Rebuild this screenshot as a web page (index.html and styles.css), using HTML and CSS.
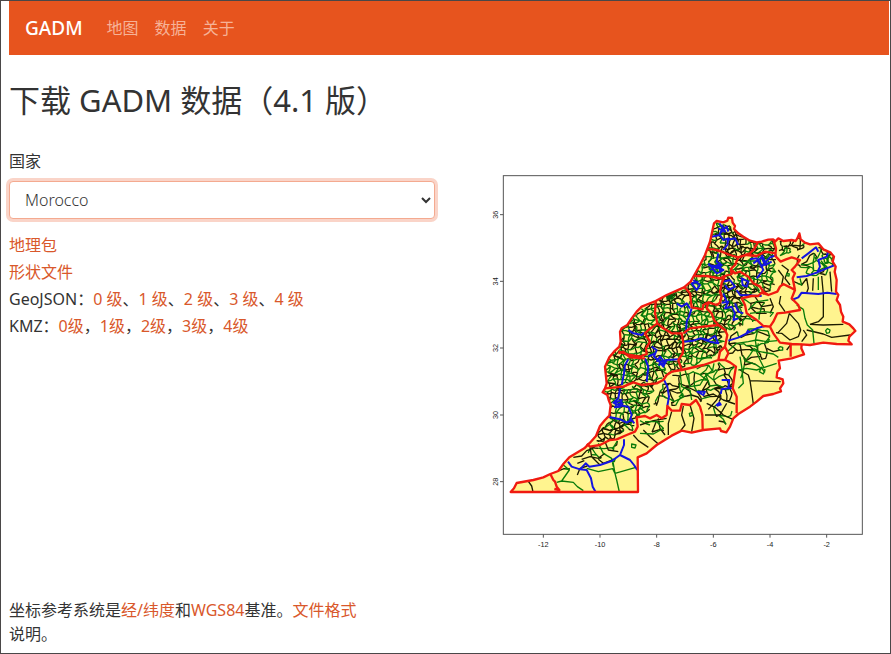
FILE: index.html
```html
<!DOCTYPE html>
<html lang="zh-CN">
<head>
    <meta charset="utf-8" />
    <meta name="viewport" content="width=device-width, initial-scale=1" />
    <title>GADM</title>
    <link rel="stylesheet" href="styles.css">
</head>
<body>
    <nav class="navbar">
        <a class="navbar-brand" href="#">GADM</a>
        <a class="nav-link" href="#">地图</a>
        <a class="nav-link" href="#">数据</a>
        <a class="nav-link" href="#">关于</a>
    </nav>

    <main>
        <h1 class="page-title">下载 GADM 数据（4.1 版）</h1>

        <div class="download">
            <div class="download-form">
                <label class="form-label" for="country">国家</label>
                <select class="form-select" id="country">
                    <option>Morocco</option>
                </select>
                <ul class="file-list">
                    <li><a href="#">地理包</a></li>
                    <li><a href="#">形状文件</a></li>
                    <li>GeoJSON：<a href="#">0 级</a>、<a href="#">1 级</a>、<a href="#">2 级</a>、<a href="#">3 级</a>、<a href="#">4 级</a></li>
                    <li>KMZ：<a href="#">0级</a>，<a href="#">1级</a>，<a href="#">2级</a>，<a href="#">3级</a>，<a href="#">4级</a></li>
                </ul>
            </div>

            <svg class="map" viewBox="-81 0 1278 1155" role="img" aria-label="Morocco">
                <defs>
                    <path id="land" d="M62 966L72 955 80 939 130 930 160 922 181 912 205 903 220 882 238 862 283 835 300 818 318 798 330 768 345 750 358 737 362 705 356 690 352 675 338 667 345 655 350 640 347 610 345 590 358 562 372 545 388 530 392 515 390 485 395 475 412 465 425 445 440 425 455 410 497 393 530 375 582 352 602 335 613 315 630 285 645 255 660 215 672 160 680 153 700 157 712 152 715 143 726 144 728 158 735 168 732 177 745 190 760 200 780 212 800 217 815 215 835 209 850 208 855 215 865 205 880 213 905 210 917 213 922 205 928 190 932 208 945 218 960 223 985 220 1000 238 1022 248 1032 260 1028 275 1037 290 1034 305 1040 330 1038 365 1045 375 1040 390 1050 405 1053 425 1060 440 1058 455 1078 463 1090 475 1096 483 1078 500 1075 512 1085 523 1040 522 1000 518 960 525 935 523 934 535 942 553 905 565 866 572 870 595 862 605 860 622 878 628 880 640 870 655 873 664 850 672 820 678 800 695 780 710 745 732 730 745 720 770 709 787 693 783 690 775 640 780 605 788 575 782 545 797 500 825 470 850 443 862 444 966Z" />
                    <clipPath id="landClip"><use href="#land" /></clipPath>
                </defs>
                <use class="land" href="#land" />

                <g clip-path="url(#landClip)">
                    <g id="communes"></g>

                    <g class="line level-4">
                        <path d="M115 934L125 948 129 966M205 903L222 896 240 897M262 915L270 895 292 888M250 862L275 858 290 842 310 835M275 868L300 860 325 865 345 850M262 880L283 872M300 832L305 860 330 885M325 868L340 880 365 870M345 815L355 840 385 845M430 795L445 812 475 832M460 780L480 800 505 822M505 745L510 775 525 795M545 725L535 760 535 795M580 708L575 735 585 765 572 782M600 705L612 745 605 785M450 765L490 752 530 745M645 735L690 735 710 700M650 700L675 712 700 735 728 748M640 680L670 672 700 690 735 702M655 718L680 690 690 670M780 632L872 635M780 632L785 665 790 702M750 600L775 615 780 632M1000 372L1000 440 985 455 960 463M960 463L1000 465 1060 463M950 480L1000 492 1025 502 1080 495M898 430L925 460 932 480 925 500M898 430L890 460 862 490M925 500L900 510 875 490 858 488M840 385L850 410 840 430M872 378L868 400 885 425M830 430L800 430 780 410M795 380L815 410 845 405M940 480L950 495 935 515M870 540L850 545 830 535M905 520L890 540" />
                        <path d="M950 325L955 355 950 368M995 318L1000 372M970 325L968 362M1020 305L1025 365M912 335L935 345 950 325M875 285L895 300 885 325 900 345M865 300L880 320 875 345" />
                    </g>
                    <g class="line level-3">
                        <path d="M200 937L215 933 238 900 225 895M215 933L250 937 262 950 280 962M290 895L325 905 368 896 375 910 435 893M368 870L375 910 380 930 388 966M325 820L340 850 365 865 370 890M220 885L238 900M425 822L438 825 435 834 425 832ZM365 868L375 868 373 875 365 874ZM940 418L945 445 952 465 968 480 972 520M940 418L920 405M1007 482L1012 476 1020 480 1018 488 1010 490ZM865 535L870 530 878 532 878 540 868 541ZM598 730L606 728 608 736 600 739ZM568 680L575 673 582 680 575 684ZM712 545L740 520 775 515 800 510 830 515 862 512M750 560L755 590 760 640 745 655M745 600L770 595 800 600 830 590 860 580M780 540L810 545 850 552 865 562M805 520L800 545 810 570 825 600 820 612 808 605 815 590M570 605L575 650 600 660 605 690M585 600L600 650 630 645 645 620 668 600 672 580M450 790L490 792 520 775 500 755 465 755M780 430L820 425 850 428 840 440M775 420L800 395 835 390M985 320L985 360M930 325L935 345 922 340M890 310L898 312 897 318 890 317Z" />
                    </g>
                    <g class="line level-2">
                        <path d="M234 875L245 890 270 898 290 900 303 925 308 950 317 966M270 898L287 880 298 890 330 885 365 873 390 855 402 825 402 808M390 855L420 870 432 885 442 900M905 390L925 382 935 368 985 372 1012 368 1040 372M920 322L950 318 980 308 1010 295 1035 285M935 265L955 250 978 232 985 245M980 310L990 290 985 270 1010 260 1015 245M582 515L610 512 630 505 655 510 675 498 685 520 660 515 640 508M715 512L745 503 770 490 800 475 825 468M768 492L775 480M520 625L532 650 537 680 532 708M415 568L405 585 402 610 395 645M465 565L475 590 470 635M485 530L500 540 492 560 510 575 530 570 565 568M495 550L475 560M500 565L520 590 530 570M500 575L510 560 525 578 505 585M695 630L718 630 715 655 695 658 692 672M715 655L730 655M622 665L645 665 640 675ZM680 705L688 698 692 704 683 707ZM390 655L385 685 370 698 385 705 415 710 425 735 420 750M370 700L395 690 390 710 372 712M355 740L390 748 410 758 425 750 433 760M375 705L400 700M415 480L430 490 455 495 462 488M605 415L597 440 590 455 588 490M560 400L575 410 590 400 600 415M688 160L700 175 690 190 710 170 715 185M685 175L705 185 695 165M665 200L690 195 700 210 715 205 712 225 700 240M710 210L735 205 745 225M655 285L680 290 700 300 680 310 655 280M685 250L680 275 695 285 675 295M660 300L690 280 690 310M780 268L800 265 815 290 840 262 860 255M790 280L815 262 825 285 845 275M805 270L820 300 800 325M815 255L830 285M610 330L630 345 620 360 605 340 625 335M700 335L720 330 735 350 715 360 705 345M755 325L775 335 770 350 758 345ZM695 398L715 395 705 415 725 410 735 430 730 450 745 445M735 400L745 425 760 430M700 370L710 395M740 360L750 375 815 378" />
                    </g>
                    <path class="casablanca" d="M527 375L550 370 548 388 530 390Z" />
                </g>

                <g class="line level-1">
                    <path d="M652 238L670 238 690 243 720 255 745 262 780 250 792 238 803 218M745 262L735 285 722 297 725 312 705 318 690 325 650 318 613 318M722 297L735 310 750 305 775 320 790 340 810 350 820 365 835 375 862 365 870 350 880 342 900 352 915 360 905 385 925 405 930 420 885 428 862 430 850 455 840 470M850 208L858 235 856 258 872 275 888 268 905 262 930 270 915 290 905 300 915 310 908 325 915 360M745 262L770 255 800 258 825 245 858 250M705 318L695 340 690 365 695 380 690 398M690 398L680 405 655 397 640 405 638 418 605 412 600 370 582 350M655 397L650 415 665 430 672 450 685 465 640 470 600 475 580 490M497 393L495 430 502 460 520 475 545 490 575 490 580 520 578 550 565 570 575 600M685 465L705 480 712 495 705 530 690 545 685 570 640 585 575 600 545 605 530 615 520 630 500 640 455 645 430 637 400 650 345 655M835 375L815 368 805 378 785 378 755 385 765 405 770 430 800 450 820 468 840 470 850 490 870 518 905 522 935 523M502 460L475 480 465 490 480 515 468 535 470 552 450 560 420 555 385 545M465 565L420 562 400 545 385 550M685 570L705 570 720 577 738 590 733 620 728 655 740 680 740 730M705 530L715 550 705 570M638 778L637 735 630 710 618 690 600 705 575 702 570 722 545 722 532 708 530 735 515 745 500 735 480 745 465 738 440 742 443 770 435 785 410 795 380 808 360 810 330 825 300 830 290 822M181 912L190 930 195 935 200 950 208 960 193 957M902 522L902 560" />
                </g>
                <use class="line country" href="#land" />

                <g class="axis">
                    <rect x="40" y="17" width="1077" height="1076" />
                    <path d="M30 134h10M30 334h10M30 534h10M30 735h10M30 935h10M160 1093v10M330 1093v10M500 1093v10M670 1093v10M840 1093v10M1010 1093v10" />
                </g>
                <g class="axis-label">
                    <text x="160" y="1131">-12</text>
                    <text x="330" y="1131">-10</text>
                    <text x="500" y="1131">-8</text>
                    <text x="670" y="1131">-6</text>
                    <text x="840" y="1131">-4</text>
                    <text x="1010" y="1131">-2</text>
                    <text transform="translate(24 134) rotate(-90)">36</text>
                    <text transform="translate(24 334) rotate(-90)">34</text>
                    <text transform="translate(24 534) rotate(-90)">32</text>
                    <text transform="translate(24 735) rotate(-90)">30</text>
                    <text transform="translate(24 935) rotate(-90)">28</text>
                </g>
            </svg>
        </div>

        <p class="notes">坐标参考系统是<a href="#">经/纬度</a>和<a href="#">WGS84</a>基准。<a href="#">文件格式</a>说明。</p>
    </main>

    <script src="map.js"></script>
</body>
</html>
```
FILE: styles.css
```css
* {
    box-sizing: border-box;
}

body {
    margin: 0;
    min-height: 100vh;
    padding: 0 1px 0 8px;
    border: 1px solid #4a4748;
    font-family: 'Noto Sans', 'Noto Sans CJK SC', sans-serif;
    font-size: 16px;
    line-height: 24px;
    color: #333;
    background: #fff;
}

a {
    color: #d9582b;
    text-decoration: none;
}

.navbar {
    display: flex;
    align-items: center;
    gap: 16px;
    height: 54px;
    padding: 0 16px;
    background: #e7541e;
}

.navbar-brand {
    margin-right: 8px;
    font-size: 19px;
    font-weight: 500;
    color: #fff;
}

.nav-link {
    color: #f6b297;
}

.page-title {
    margin: 25px 0 19px;
    font-size: 31px;
    font-weight: 400;
    line-height: 40px;
}

.download {
    display: grid;
    grid-template-columns: 1fr 1fr;
    gap: 28px;
}

.download-form {
    padding-top: 10px;
}

.form-label {
    display: block;
    margin-bottom: 8px;
}

.form-select {
    display: block;
    width: 100%;
    height: 38px;
    padding: 6px 2px 6px 11px;
    border: 1px solid #f4aa90;
    border-radius: 4px;
    outline: none;
    box-shadow: 0 0 0 3px #fad4c8;
    font-family: inherit;
    font-size: 16px;
    font-weight: 300;
    color: #333;
    background: #fff;
}

.file-list {
    margin: 13px 0 0;
    padding: 0;
    list-style: none;
    line-height: 27px;
}

.map {
    display: block;
    width: 100%;
    margin-top: 31px;
}

.notes {
    max-width: 40%;
    margin: 43px 0 0;
}

.land {
    fill: #fff48f;
}

.line {
    fill: none;
    stroke-linejoin: round;
}

.level-4 {
    stroke: #1c1c00;
    stroke-width: 4;
}

.level-3 {
    stroke: #0a7a0a;
    stroke-width: 4;
}

.level-2 {
    stroke: #1414e0;
    stroke-width: 6;
}

.level-1 {
    stroke: #f01a10;
    stroke-width: 7;
}

.country {
    stroke: #f01a10;
    stroke-width: 7;
}

.casablanca {
    fill: #0a5a0a;
}

.axis {
    fill: none;
    stroke: #555;
    stroke-width: 3;
}

.axis-label {
    font-family: 'Liberation Sans', sans-serif;
    font-size: 22px;
    text-anchor: middle;
    fill: #222;
}
```
FILE: map.js
```js
// commune borders: an irregular mesh in each zone, finer where communes are small
const zones = [
    { cell: 12, skip: 0.06, points: '672,150 740,170 800,217 850,208 860,260 860,340 835,375 755,380 765,430 800,452 760,470 712,490 705,540 640,583 575,600 530,615 500,640 430,642 340,655 330,540 390,460 500,380 600,330' },
    { cell: 12, skip: 0.1, points: '340,655 430,642 520,625 480,680 480,725 440,745 435,785 300,832 355,740' },
    { cell: 13, skip: 0.15, points: '858,200 990,210 940,245 870,258' },
    { cell: 12, skip: 0.1, points: '980,215 1040,240 1040,290 995,285' },
    { cell: 22, skip: 0.12, points: '480,660 530,615 685,575 735,590 728,655 735,700 640,700 610,690 570,710 530,705 480,735' },
    { cell: 25, skip: 0.15, points: '712,500 760,470 840,470 862,510 862,560 820,620 740,640 735,590 700,550' },
    { cell: 21, skip: 0.15, points: '920,250 1000,235 1035,300 1035,320 920,330' },
    { cell: 21, skip: 0.2, points: '270,840 400,800 400,830 310,880' },
    { cell: 24, skip: 0.25, points: '755,380 835,375 820,465 775,430' },
    { cell: 25, skip: 0.3, points: '445,745 530,740 530,795 480,820' },
    { cell: 24, skip: 0.2, points: '640,690 735,690 740,735 700,775 640,725' }
];

let seed = 41;
function random() {
    seed = (seed * 16807) % 2147483647;
    return seed / 2147483647;
}

function inside(x, y, polygon) {
    let hit = false;
    for (let i = 0, j = polygon.length - 1; i < polygon.length; j = i++) {
        const [xi, yi] = polygon[i];
        const [xj, yj] = polygon[j];
        if ((yi > y) !== (yj > y) && x < (xj - xi) * (y - yi) / (yj - yi) + xi) {
            hit = !hit;
        }
    }
    return hit;
}

const paths = { 'level-4': '', 'level-3': '' };

zones.forEach(zone => {
    const polygon = zone.points.split(' ').map(p => p.split(',').map(Number));
    const xs = polygon.map(p => p[0]);
    const ys = polygon.map(p => p[1]);
    const left = Math.min(...xs);
    const top = Math.min(...ys);
    const cols = Math.ceil((Math.max(...xs) - left) / zone.cell) + 1;
    const rows = Math.ceil((Math.max(...ys) - top) / zone.cell) + 1;
    const grid = [];

    for (let r = 0; r <= rows; r++) {
        grid.push([]);
        for (let c = 0; c <= cols; c++) {
            grid[r].push([
                Math.round(left + (c + (r % 2) / 2 + (random() - 0.5) * 1.1) * zone.cell),
                Math.round(top + (r + (random() - 0.5) * 1.1) * zone.cell)
            ]);
        }
    }

    function edge(a, b) {
        if (random() < zone.skip || !inside(a[0], a[1], polygon) || !inside(b[0], b[1], polygon)) {
            return;
        }
        // green borders come in patches
        const patch = Math.sin(a[0] / 31) + Math.cos(a[1] / 23);
        const level = random() < 0.45 + patch * 0.16 ? 'level-3' : 'level-4';
        const mx = Math.round((a[0] + b[0]) / 2 + (random() - 0.5) * zone.cell * 0.5);
        const my = Math.round((a[1] + b[1]) / 2 + (random() - 0.5) * zone.cell * 0.5);
        paths[level] += `M${a}L${mx} ${my} ${b}`;
    }

    for (let r = 0; r < rows; r++) {
        for (let c = 0; c < cols; c++) {
            edge(grid[r][c], grid[r][c + 1]);
            edge(grid[r][c], grid[r + 1][c]);
        }
    }
});

const communes = document.getElementById('communes');
Object.keys(paths).forEach(level => {
    const path = document.createElementNS('http://www.w3.org/2000/svg', 'path');
    path.setAttribute('class', 'line ' + level);
    path.setAttribute('d', paths[level]);
    communes.appendChild(path);
});
```
